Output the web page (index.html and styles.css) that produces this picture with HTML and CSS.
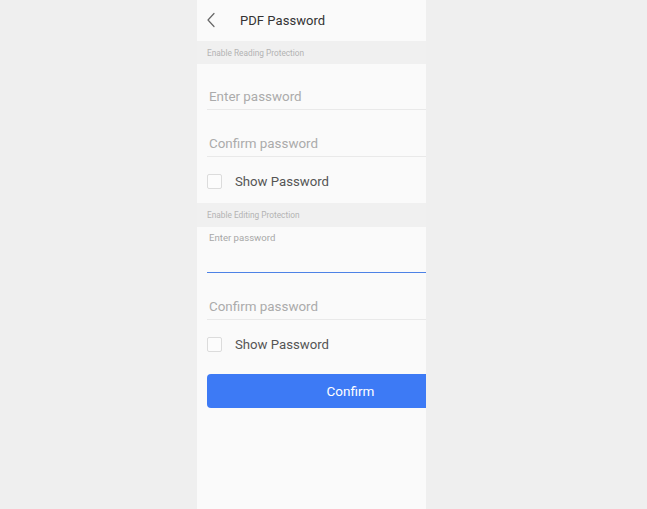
FILE: index.html
```html
<!DOCTYPE html>
<html lang="en">
<head>
<meta charset="utf-8">
<title>PDF Password</title>
<link rel="stylesheet" href="styles.css">
</head>
<body>
<div class="stage">
  <div class="phone">
    <div class="screen">
      <header class="topbar">
        <svg class="back" width="10" height="16" viewBox="0 0 10 16"><path d="M8 1.5 L2 8 L8 14.5" fill="none" stroke="#666" stroke-width="1.2" stroke-linecap="round" stroke-linejoin="round"/></svg>
        <span class="title">PDF Password</span>
      </header>

      <div class="section-head">Enable Reading Protection</div>
      <div class="group">
        <div class="field field-a"><span class="ph">Enter password</span></div>
        <div class="field field-b"><span class="ph">Confirm password</span></div>
        <label class="check-row check-a"><span class="box"></span><span class="check-text">Show Password</span></label>
      </div>

      <div class="section-head head-2">Enable Editing Protection</div>
      <div class="group">
        <div class="field field-focus"><span class="float-label">Enter password</span></div>
        <div class="field field-c"><span class="ph">Confirm password</span></div>
        <label class="check-row check-b"><span class="box"></span><span class="check-text">Show Password</span></label>
        <button class="confirm">Confirm</button>
      </div>
    </div>
  </div>
</div>
</body>
</html>
```

FILE: styles.css
```css
html, body {
  margin: 0;
  padding: 0;
}
body {
  background: #efefef;
  font-family: Roboto, "Liberation Sans", Arial, sans-serif;
  width: 647px;
  height: 509px;
  overflow: hidden;
}
.stage {
  display: flex;
  justify-content: flex-start;
  padding-left: 197px;
  height: 509px;
}
.phone {
  width: 229px;
  height: 509px;
  overflow: hidden;
  background: #fafafa;
}
.screen {
  width: 307px;
  display: flex;
  flex-direction: column;
}
.topbar {
  height: 41px;
  display: flex;
  align-items: center;
  padding-left: 9px;
  box-sizing: border-box;
  padding-bottom: 1px;
}
.back {
  display: block;
}
.title {
  margin-left: 24px;
  font-size: 13px;
  color: #333;
  letter-spacing: 0.05px;
}
.section-head {
  height: 23px;
  background: #f0f0f0;
  color: #b3b3b3;
  font-size: 8.3px;
  display: flex;
  align-items: center;
  padding-left: 10px;
}
.head-2 {
  height: 24px;
  margin-top: 1px;
}
.group {
  display: flex;
  flex-direction: column;
  padding: 0 10px;
}
.field {
  border-bottom: 1px solid #e9e9e9;
  box-sizing: border-box;
  height: 46px;
  padding-left: 2px;
  display: flex;
  flex-direction: column;
}
.ph {
  font-size: 13.4px;
  line-height: 16px;
  color: #ababab;
}
.field-a .ph { margin-top: 25px; }
.field-b { height: 47px; }
.field-b .ph { margin-top: 26px; }
.field-c { height: 47px; }
.field-c .ph { margin-top: 26px; }
.field-focus {
  border-bottom: 1.5px solid #4d82e6;
}
.float-label {
  font-size: 9.6px;
  line-height: 12px;
  color: #a8a8a8;
  margin-top: 5px;
}
.check-row {
  display: flex;
  align-items: center;
  box-sizing: border-box;
}
.check-a { height: 45px; padding-top: 4px; }
.check-b { height: 46px; padding-top: 3px; }
.box {
  width: 13px;
  height: 13px;
  border: 1px solid #dcdcdc;
  border-radius: 2px;
  background: #fcfcfc;
}
.check-text {
  margin-left: 13px;
  font-size: 13.2px;
  color: #555;
}
.confirm {
  margin-top: 8px;
  height: 34px;
  border: none;
  border-radius: 4px;
  background: #3d7af5;
  color: #fff;
  font-family: Roboto, "Liberation Sans", Arial, sans-serif;
  font-size: 13.5px;
  padding: 0;
}
```
